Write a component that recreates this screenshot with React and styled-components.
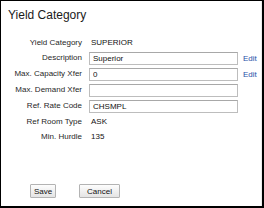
import React from 'react'
import styled, { createGlobalStyle } from 'styled-components'

const rows = [
  { label: 'Yield Category', value: 'SUPERIOR' },
  { label: 'Description', input: 'Superior', edit: true },
  { label: 'Max. Capacity Xfer', input: '0', edit: true },
  { label: 'Max. Demand Xfer', input: '' },
  { label: 'Ref. Rate Code', input: 'CHSMPL' },
  { label: 'Ref Room Type', value: 'ASK' },
  { label: 'Min. Hurdle', value: '135' },
]

export default function App() {
  return (
    <>
      <GlobalStyle />
      <Dialog>
        <Title>Yield Category</Title>
        <Form>
          {rows.map((r) => (
            <React.Fragment key={r.label}>
              <Label tall={r.input !== undefined}>{r.label}</Label>
              <Cell tall={r.input !== undefined}>
                {r.input !== undefined
                  ? <Field defaultValue={r.input} />
                  : <Value>{r.value}</Value>
                }
                {r.edit ? <EditLink href="#">Edit</EditLink> : null}
              </Cell>
            </React.Fragment>
          ))}
        </Form>
        <Filler />
        <Buttons>
          <Button w={26}>Save</Button>
          <Button w={41}>Cancel</Button>
        </Buttons>
      </Dialog>
    </>
  )
}

/***************************** Styled Components *****************************/

const GlobalStyle = createGlobalStyle`
  html, body {
    margin: 0;
    padding: 0;
    background: #fff;
  }
`

const Dialog = styled.div`
  box-sizing: border-box;
  width: 264px;
  height: 208px;
  display: flex;
  flex-direction: column;
  background: #fff;
  border-left: 1px solid #000;
  border-top: 1px solid #000;
  border-right: 2px solid #000;
  border-bottom: 2px solid #000;
  box-shadow: inset -5px -4px 0 -4px #ececec;
  font-family: "Liberation Sans", Arial, sans-serif;
  color: #222;
`

const Title = styled.div`
  padding: 6px 0 0 7px;
  height: 16px;
  font-size: 12px;
  line-height: 16px;
  color: #1a1a1a;
`

const Form = styled.div`
  display: grid;
  grid-template-columns: 81px 1fr;
  column-gap: 7px;
  margin-top: 12px;
`

const Label = styled.div`
  height: ${(p) => (p.tall ? 16 : 15)}px;
  line-height: ${(p) => (p.tall ? 16 : 15)}px;
  text-align: right;
  font-size: 8px;
  color: #1f1f1f;
  white-space: nowrap;
`

const Cell = styled.div`
  height: ${(p) => (p.tall ? 16 : 15)}px;
  display: flex;
  align-items: center;
  gap: 5px;
`

const Value = styled.span`
  font-size: 8px;
  color: #111;
  padding-left: 2px;
`

const Field = styled.input`
  box-sizing: border-box;
  width: 149px;
  height: 13px;
  margin: 0;
  padding: 0 3px;
  border: 1px solid #bdbdbd;
  border-top-color: #a8a8a8;
  font-family: "Liberation Sans", Arial, sans-serif;
  font-size: 8px;
  color: #111;
  background: #fff;
  outline: none;
`

const EditLink = styled.a`
  font-size: 8px;
  color: #1f4fa8;
  text-decoration: none;
`

const Filler = styled.div`
  flex: 1 1 auto;
`

const Buttons = styled.div`
  display: flex;
  gap: 23px;
  padding: 0 0 8px 29px;
`

const Button = styled.button`
  box-sizing: border-box;
  width: ${(p) => p.w}px;
  height: 14px;
  padding: 0;
  border: 1px solid #b3b3b3;
  border-radius: 1px;
  background: linear-gradient(#fdfdfd, #e4e4e4);
  font-family: "Liberation Sans", Arial, sans-serif;
  font-size: 8px;
  color: #111;
`
